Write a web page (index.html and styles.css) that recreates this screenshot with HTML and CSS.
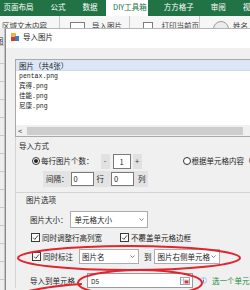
FILE: index.html
```html
<!DOCTYPE html>
<html>
<head>
<meta charset="utf-8">
<link rel="stylesheet" href="styles.css">
</head>
<body>
<div class="screen">
  <div class="tabs">
    <span class="tab first">页面布局</span>
    <span class="tab">公式</span>
    <span class="tab">数据</span>
    <span class="tab active">DIY工具箱</span>
    <span class="tab after">方方格子</span>
    <span class="tab">审阅</span>
    <span class="tab">视图</span>
  </div>
  <div class="ribbon">
    <div class="rg g1"><span class="rb-text">区域文本内容</span></div>
    <div class="rg g2"><span class="rb-sq wide"></span><span class="rb-text t2">导入图片</span></div>
    <div class="rg g3"><span class="rb-sq narrow"></span><span class="rb-text t3">打印当前页</span></div>
    <div class="rg g4"><span class="rb-circle"></span><span class="rb-text t4">姓名</span></div>
  </div>
  <div class="work">
    <div class="edge"><span class="edge-char">图</span></div>
    <div class="dialog">
      <div class="titlebar">
        <svg class="t-icon" width="8" height="8" viewBox="0 0 8 8">
          <rect x="0" y="0" width="5" height="5" fill="#f3b23a"/>
          <rect x="0" y="4" width="4" height="4" fill="#d8342c"/>
          <rect x="4" y="3" width="4" height="5" fill="#3d7cc9"/>
        </svg>
        <span class="t-text">导入图片</span>
      </div>
      <div class="dlg-body">
        <div class="listbox">
          <div class="list-head">图片（共4张）</div>
          <div class="list-items">
            <div>pentax.png</div>
            <div>宾得.png</div>
            <div>佳能.png</div>
            <div>尼康.png</div>
          </div>
          <div class="hscroll"><span class="hs-arrow">&lt;</span><span class="hs-thumb"></span></div>
        </div>
        <div class="section s1">
          <div class="sec-title">导入方式</div>
          <div class="row r-mode">
            <span class="radio on"></span>
            <span class="lbl">每行图片个数：</span>
            <span class="step-btn">-</span>
            <span class="step-val">1</span>
            <span class="step-btn plus">+</span>
            <span class="radio r2"></span>
            <span class="lbl">根据单元格内容（按列）</span>
          </div>
          <div class="row r-gap">
            <span class="lbl">间隔：</span>
            <span class="num-in n1">0</span>
            <span class="lbl u1">行</span>
            <span class="num-in n2">0</span>
            <span class="lbl u2">列</span>
          </div>
        </div>
        <div class="section s2">
          <div class="sec-title t2">图片选项</div>
          <div class="row r-size">
            <span class="lbl">图片大小：</span>
            <span class="dd dd-size">单元格大小<svg class="chev" width="5" height="3" viewBox="0 0 5 3"><path d="M0.5 0.5 L2.5 2.5 L4.5 0.5" fill="none" stroke="#666" stroke-width="0.8"/></svg></span>
          </div>
          <div class="row r-cb">
            <span class="cb c1"><svg width="7" height="7" viewBox="0 0 7 7"><path d="M1 3.6 L2.8 5.4 L6 1.4" fill="none" stroke="#333" stroke-width="0.9"/></svg></span>
            <span class="lbl cbl">同时调整行高列宽</span>
            <span class="cb c2"><svg width="7" height="7" viewBox="0 0 7 7"><path d="M1 3.6 L2.8 5.4 L6 1.4" fill="none" stroke="#333" stroke-width="0.9"/></svg></span>
            <span class="lbl cbl">不覆盖单元格边框</span>
          </div>
          <div class="row r-mark">
            <span class="cb c3"><svg width="7" height="7" viewBox="0 0 7 7"><path d="M1 3.6 L2.8 5.4 L6 1.4" fill="none" stroke="#333" stroke-width="0.9"/></svg></span>
            <span class="lbl cbl">同时标注</span>
            <span class="dd dd-name">图片名<svg class="chev" width="5" height="3" viewBox="0 0 5 3"><path d="M0.5 0.5 L2.5 2.5 L4.5 0.5" fill="none" stroke="#666" stroke-width="0.8"/></svg></span>
            <span class="lbl to">到</span>
            <span class="dd dd-pos">图片右侧单元格<svg class="chev" width="5" height="3" viewBox="0 0 5 3"><path d="M0.5 0.5 L2.5 2.5 L4.5 0.5" fill="none" stroke="#666" stroke-width="0.8"/></svg></span>
          </div>
          <div class="row r-target">
            <span class="lbl">导入到单元格</span>
            <span class="cell-in">D5
              <svg class="pick" width="10" height="8" viewBox="0 0 10 8">
                <rect x="0.5" y="0.5" width="9" height="7" fill="#fff" stroke="#7a8aa6" stroke-width="0.8"/>
                <path d="M0.5 3 H9.5 M3.5 0.5 V7.5" stroke="#9aa8c0" stroke-width="0.6"/>
                <rect x="4.5" y="3.5" width="4" height="3" fill="#d23a3a"/>
              </svg>
            </span>
            <svg class="info" width="7" height="7" viewBox="0 0 7 7">
              <circle cx="3.5" cy="3.5" r="3.1" fill="#e8f0fb" stroke="#8fb0dc" stroke-width="0.6"/>
              <rect x="3.05" y="3" width="0.9" height="2.6" fill="#2f66b3"/>
              <rect x="3.05" y="1.5" width="0.9" height="0.9" fill="#2f66b3"/>
            </svg>
            <span class="hint">选一个单元格</span>
          </div>
        </div>
      </div>
    </div>
  </div>
  <svg class="annot" width="250" height="290" viewBox="0 0 250 290">
    <ellipse cx="129" cy="258" rx="111" ry="12" fill="none" stroke="#e1242d" stroke-width="2"/>
    <ellipse cx="140" cy="283" rx="62" ry="13" fill="none" stroke="#e1242d" stroke-width="2"/>
    <path d="M20 293 Q48 286 82 284" fill="none" stroke="#e1242d" stroke-width="2"/>
  </svg>
</div>
</body>
</html>
```

FILE: styles.css
```css
* { box-sizing: border-box; margin: 0; padding: 0; }

body {
  width: 250px;
  height: 290px;
  overflow: hidden;
  background: #fff;
  font-family: "Noto Sans CJK SC", "Noto Sans", sans-serif;
  font-size: 7.5px;
  color: #1e1e1e;
}

.screen {
  position: relative;
  width: 250px;
  height: 290px;
  overflow: hidden;
}

/* ribbon tabs */
.tabs {
  display: flex;
  height: 16px;
  background: #217346;
  color: #fff;
  white-space: nowrap;
}
.tab {
  flex: none;
  height: 16px;
  padding: 2px 8.5px 0;
  line-height: 9px;
}
.tab.first { margin-left: -5px; }
.tab.active {
  background: #fff;
  color: #217346;
  padding: 2px 1px 0 7px;
}
.tab.after { padding-left: 16px; }

/* ribbon strip */
.ribbon {
  display: flex;
  height: 12px;
  background: #f6f6f6;
  overflow: hidden;
  white-space: nowrap;
  color: #3a3a3a;
}
.rg {
  flex: none;
  display: flex;
  align-items: flex-start;
  height: 12px;
  border-right: 1px solid #c8c8c8;
}
.g1 { width: 60px; padding-left: 2px; }
.g2 { width: 70px; }
.g3 { width: 70px; }
.g4 { flex: 1; border-right: none; }
.rb-text { padding-top: 5px; line-height: 9px; }
.rb-sq {
  margin-top: 6px;
  height: 9px;
  background: #fff;
  border: 1px solid #7d7d7d;
}
.rb-sq.wide { width: 15px; margin-left: 10px; }
.rb-sq.narrow { width: 10px; margin-left: 13px; }
.t2 { margin-left: 7px; }
.t3 { margin-left: 9px; }
.rb-circle {
  margin-top: 5px;
  margin-left: 13px;
  width: 16px;
  height: 16px;
  border-radius: 50%;
  border: 1px solid #9a9a9a;
  background: #ececec;
}
.t4 { margin-left: 4px; }

/* work area */
.work {
  display: flex;
  height: 262px;
}
.edge {
  flex: none;
  width: 5px;
  overflow: hidden;
  background: repeating-linear-gradient(to bottom, #ededed 0, #ededed 17px, #c9c9c9 17px, #c9c9c9 18px);
  border-right: 1px solid #c2c2c2;
}
.edge-char {
  display: block;
  margin-top: 8px;
  margin-left: -4px;
  line-height: 9px;
  color: #333;
}

.dialog {
  flex: none;
  width: 300px;
  display: flex;
  flex-direction: column;
  border-left: 1px solid #8a8a8a;
  border-top: 1px solid #b5b5b5;
  background: #f0f0f0;
}
.titlebar {
  height: 19px;
  background: #fff;
  display: flex;
  align-items: flex-start;
  padding: 3px 0 0 5px;
}
.t-icon { margin-top: 1px; flex: none; }
.t-text { margin-left: 4px; line-height: 10px; }

.dlg-body {
  padding: 11px 0 0 9px;
}

/* list */
.listbox {
  width: 290px;
  height: 78px;
  border: 1px solid #a9a9a9;
  background: #fff;
  display: flex;
  flex-direction: column;
}
.list-head {
  height: 11px;
  line-height: 11px;
  padding-left: 3px;
  background: #dbe7f6;
  border-bottom: 1px solid #cbdaee;
}
.list-items {
  height: 54px;
  padding: 1px 0 0 3px;
  font-family: "Liberation Mono", "Noto Sans CJK SC", monospace;
  font-size: 6.5px;
  line-height: 10px;
  color: #222;
}
.hscroll {
  height: 11px;
  display: flex;
  align-items: center;
  background: #f0f0f0;
}
.hs-arrow {
  width: 11px;
  padding-left: 2px;
  font-size: 7px;
  font-weight: bold;
  color: #555;
  line-height: 8px;
}
.hs-thumb {
  width: 216px;
  height: 8px;
  background: #cdcdcd;
}

/* sections */
.section {
  border-left: 1px solid #d4d4d4;
}
.s1 { padding: 3px 0 5px; }
.s2 { border-top: 1px solid #d4d4d4; }
.sec-title {
  padding-left: 3px;
  line-height: 12px;
  height: 12px;
}
.sec-title.t2 { line-height: 13px; height: 13px; }

.row {
  display: flex;
  align-items: center;
  white-space: nowrap;
}
.lbl { line-height: 10px; flex: none; }

.r-mode { height: 18px; padding-left: 16px; }
.radio {
  flex: none;
  width: 8px;
  height: 8px;
  border-radius: 50%;
  border: 1px solid #333;
  background: #fff;
  margin-right: 1px;
  display: flex;
  align-items: center;
  justify-content: center;
}
.radio.on::after {
  content: "";
  width: 4px;
  height: 4px;
  border-radius: 50%;
  background: #222;
}
.radio.r2 { margin-left: 41px; }
.step-btn {
  flex: none;
  margin-left: 7px;
  width: 9px;
  height: 15px;
  background: #e1e1e1;
  text-align: center;
  line-height: 14px;
  color: #333;
}
.step-btn.plus { margin-left: 2px; }
.step-val {
  flex: none;
  margin-left: 3px;
  width: 18px;
  height: 15px;
  background: #fff;
  border: 1px solid #7a7a7a;
  text-align: center;
  line-height: 13px;
}

.r-gap {
  margin-top: 1px;
  margin-left: 27px;
  width: 105px;
  height: 16px;
  background: #e3e3e3;
  padding-left: 3px;
}
.num-in {
  flex: none;
  width: 23px;
  height: 14px;
  background: #fff;
  border: 1px solid #7a7a7a;
  padding-left: 2px;
  line-height: 12px;
}
.n1 { margin-left: 2px; }
.u1 { margin-left: 3px; }
.n2 { margin-left: 7px; }
.u2 { margin-left: 4px; }

.r-size { margin-top: 5px; height: 17px; padding-left: 14px; }
.dd {
  flex: none;
  display: flex;
  align-items: center;
  justify-content: space-between;
  height: 17px;
  background: #fff;
  border: 1px solid #acacac;
  padding: 0 3px 0 4px;
  line-height: 10px;
}
.dd-size { width: 78px; margin-left: 2px; }
.chev { flex: none; }

.r-cb { margin-top: 4px; height: 11px; padding-left: 15px; }
.cb {
  flex: none;
  width: 9px;
  height: 9px;
  border: 1px solid #3a3a3a;
  background: #fff;
  display: flex;
  align-items: center;
  justify-content: center;
}
.cbl { margin-left: 2px; }
.c2 { margin-left: 18px; }

.r-mark { margin-top: 6px; height: 15px; padding-left: 16px; }
.dd-name { width: 60px; height: 15px; margin-left: 6px; padding-left: 2px; }
.to { margin-left: 5px; }
.dd-pos { width: 66px; height: 15px; margin-left: 2px; padding-left: 3px; }

.r-target { margin-top: 9px; height: 15px; padding-left: 14px; }
.cell-in {
  flex: none;
  display: flex;
  align-items: center;
  margin-left: 12px;
  width: 106px;
  height: 15px;
  background: #fff;
  border: 1px solid #9a9a9a;
  padding: 0 2px 0 3px;
  font-size: 6.5px;
  line-height: 10px;
}
.pick { margin-left: auto; flex: none; }
.info { margin-left: 7px; flex: none; }
.hint { margin-left: 5px; color: #1f8a3e; line-height: 10px; }

.annot {
  position: absolute;
  left: 0;
  top: 0;
  pointer-events: none;
}
```
